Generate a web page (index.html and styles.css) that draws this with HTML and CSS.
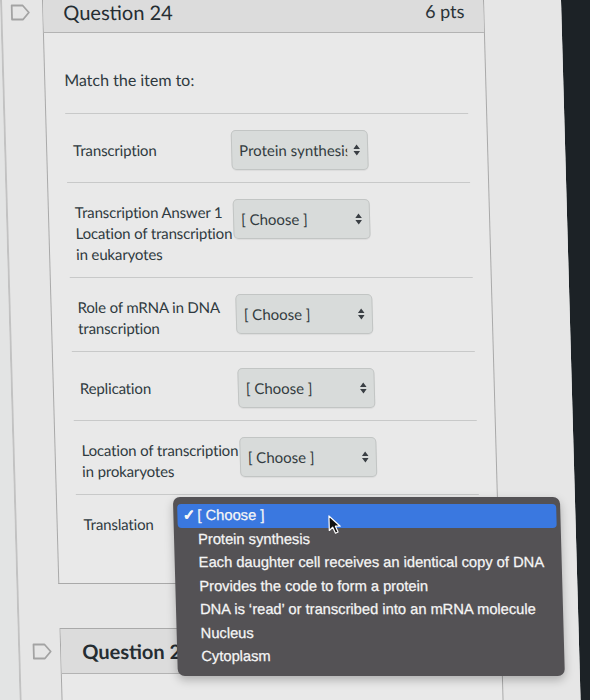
FILE: index.html
```html
<!DOCTYPE html>
<html lang="en">
<head>
<meta charset="utf-8">
<title>Question 24</title>
<link rel="stylesheet" href="styles.css">
</head>
<body>
<div class="screen">
  <div class="page">
    <div class="qblock">
      <div class="gutter gutter-1">
        <svg class="bookmark" width="20" height="17" viewBox="0 0 20 17"><path d="M1.5 1.5 H12.5 L18.5 8.5 L12.5 15.5 H1.5 Z" fill="none" stroke="#a3a3a3" stroke-width="1.8" stroke-linejoin="round"/></svg>
      </div>
      <div class="card">
        <div class="card-head">
          <span class="q-title">Question 24</span>
          <span class="pts">6 pts</span>
        </div>
        <div class="card-body">
          <p class="prompt">Match the item to:</p>
          <div class="row row-single">
            <div class="label">Transcription</div>
            <div class="select"><span class="sel-text">Protein synthesis</span><svg class="arrows" width="7" height="12" viewBox="0 0 7 12"><path d="M3.5 0.5 L6.8 5 H0.2 Z M3.5 11.5 L6.8 7 H0.2 Z" fill="#3a3f44"/></svg></div>
          </div>
          <div class="row">
            <div class="label">Transcription Answer 1<br>Location of transcription<br>in eukaryotes</div>
            <div class="select"><span class="sel-text">[ Choose ]</span><svg class="arrows" width="7" height="12" viewBox="0 0 7 12"><path d="M3.5 0.5 L6.8 5 H0.2 Z M3.5 11.5 L6.8 7 H0.2 Z" fill="#3a3f44"/></svg></div>
          </div>
          <div class="row">
            <div class="label">Role of mRNA in DNA<br>transcription</div>
            <div class="select"><span class="sel-text">[ Choose ]</span><svg class="arrows" width="7" height="12" viewBox="0 0 7 12"><path d="M3.5 0.5 L6.8 5 H0.2 Z M3.5 11.5 L6.8 7 H0.2 Z" fill="#3a3f44"/></svg></div>
          </div>
          <div class="row row-single">
            <div class="label">Replication</div>
            <div class="select"><span class="sel-text">[ Choose ]</span><svg class="arrows" width="7" height="12" viewBox="0 0 7 12"><path d="M3.5 0.5 L6.8 5 H0.2 Z M3.5 11.5 L6.8 7 H0.2 Z" fill="#3a3f44"/></svg></div>
          </div>
          <div class="row">
            <div class="label">Location of transcription<br>in prokaryotes</div>
            <div class="select"><span class="sel-text">[ Choose ]</span><svg class="arrows" width="7" height="12" viewBox="0 0 7 12"><path d="M3.5 0.5 L6.8 5 H0.2 Z M3.5 11.5 L6.8 7 H0.2 Z" fill="#3a3f44"/></svg></div>
          </div>
          <div class="row">
            <div class="label">Translation</div>
            <div class="select"><span class="sel-text">[ Choose ]</span><svg class="arrows" width="7" height="12" viewBox="0 0 7 12"><path d="M3.5 0.5 L6.8 5 H0.2 Z M3.5 11.5 L6.8 7 H0.2 Z" fill="#3a3f44"/></svg></div>
          </div>
        </div>
      </div>
    </div>

    <div class="qblock qblock-2">
      <div class="gutter gutter-2">
        <svg class="bookmark" width="20" height="17" viewBox="0 0 20 17"><path d="M1.5 1.5 H12.5 L18.5 8.5 L12.5 15.5 H1.5 Z" fill="none" stroke="#a3a3a3" stroke-width="1.8" stroke-linejoin="round"/></svg>
      </div>
      <div class="card card-2">
        <div class="card-head card-head-2">
          <span class="q-title q-title-2">Question 25</span>
          <span class="pts">6 pts</span>
        </div>
        <div class="card-body-2"></div>
      </div>
    </div>

    <div class="menu">
      <div class="menu-item active"><span class="check">✓</span>[ Choose ]</div>
      <div class="menu-item">Protein synthesis</div>
      <div class="menu-item">Each daughter cell receives an identical copy of DNA</div>
      <div class="menu-item">Provides the code to form a protein</div>
      <div class="menu-item">DNA is ‘read’ or transcribed into an mRNA molecule</div>
      <div class="menu-item">Nucleus</div>
      <div class="menu-item">Cytoplasm</div>
      <svg class="cursor" width="14" height="20" viewBox="0 0 14 20"><path d="M1.5 1 L1.5 15.5 L5 12.2 L7.6 18.2 L10.2 17 L7.7 11.2 L12.5 11.2 Z" fill="#111" stroke="#fff" stroke-width="1.2" stroke-linejoin="round"/></svg>
    </div>
  </div>
  <div class="bezel"></div>
</div>
</body>
</html>
```

FILE: styles.css
```css
html, body {
  margin: 0;
  padding: 0;
}

body {
  width: 590px;
  height: 700px;
  overflow: hidden;
  background: #e3e4e4;
  font-family: Lato, "Noto Sans", sans-serif;
  color: #2f3a40;
}

.screen {
  display: flex;
  height: 700px;
  overflow: hidden;
  transform: skewX(1.6deg);
  transform-origin: 0 0;
}

.page {
  position: relative;
  width: 561px;
  flex: none;
  box-sizing: border-box;
  background: #e6e6e6;
  border-left: 2px solid #c2c2c2;
}

.bezel {
  flex: 1;
  background: #1c2226;
}

.qblock {
  display: flex;
}

.gutter {
  width: 40px;
  flex: none;
  box-sizing: border-box;
}

.gutter-1 {
  padding: 4px 0 0 8px;
}

.gutter-2 {
  padding: 15px 0 0 12px;
}

.bookmark {
  display: block;
}

.card {
  width: 442px;
  flex: none;
  box-sizing: border-box;
  background: #e9e9e9;
  border: 1px solid #a9a9a9;
  border-top: none;
}

.card-head {
  display: flex;
  justify-content: space-between;
  align-items: flex-start;
  height: 33px;
  box-sizing: border-box;
  padding: 0 19px 0 20px;
  background: #dcdcdc;
  border-bottom: 1px solid #b3b3b3;
}

.q-title {
  font-size: 20px;
  line-height: 24px;
  color: #252d32;
}

.q-title-2 {
  font-weight: 700;
}

.pts {
  font-size: 18px;
  line-height: 22px;
  color: #2a3338;
}

.card-body {
  padding: 36px 18px 20px 19px;
}

.prompt {
  margin: 0 0 22px;
  font-size: 16px;
  line-height: 22px;
}

.row {
  display: flex;
  align-items: flex-start;
  padding: 16px 0 12px 7px;
  border-top: 1px solid #c8c9c9;
}

.row-single {
  align-items: center;
}

.label {
  width: 158px;
  flex: none;
  font-size: 15px;
  letter-spacing: -0.15px;
  line-height: 21px;
  padding-top: 3px;
  white-space: nowrap;
}

.row-single .label {
  padding-top: 0;
}

.select {
  width: 137px;
  height: 40px;
  flex: none;
  box-sizing: border-box;
  display: flex;
  align-items: center;
  gap: 6px;
  padding: 0 7px 0 7px;
  background: #d8dbda;
  border: 1px solid #c2c5c4;
  border-radius: 5px;
  box-shadow: 0 1px 1px rgba(0, 0, 0, 0.06);
}

.sel-text {
  flex: 1;
  overflow: hidden;
  white-space: nowrap;
  font-size: 15px;
  line-height: 20px;
  color: #333b40;
}

.arrows {
  flex: none;
  display: block;
}

.qblock-2 {
  margin-top: 44px;
}

.card-2 {
  border-top: 1px solid #a9a9a9;
}

.card-head-2 {
  height: 45px;
  align-items: center;
  padding: 0 19px 0 21px;
}

.card-body-2 {
  height: 40px;
}

.menu {
  position: absolute;
  left: 157px;
  top: 497px;
  width: 387px;
  box-sizing: border-box;
  padding: 7px 4px;
  background: #545255;
  border-radius: 7px;
  box-shadow: 0 4px 10px rgba(0, 0, 0, 0.25);
  font-family: "Liberation Sans", Arial, sans-serif;
}

.menu-item {
  position: relative;
  height: 23.5px;
  line-height: 23.5px;
  padding-left: 20px;
  font-size: 14.7px;
  color: #f6f6f6;
  -webkit-text-stroke: 0.25px #f6f6f6;
  white-space: nowrap;
}

.menu-item.active {
  background: #3a78e0;
  border-radius: 4px;
}

.check {
  position: absolute;
  left: 5px;
  top: 0;
  font-weight: 700;
}

.cursor {
  position: absolute;
  left: 154px;
  top: 18px;
}
```
